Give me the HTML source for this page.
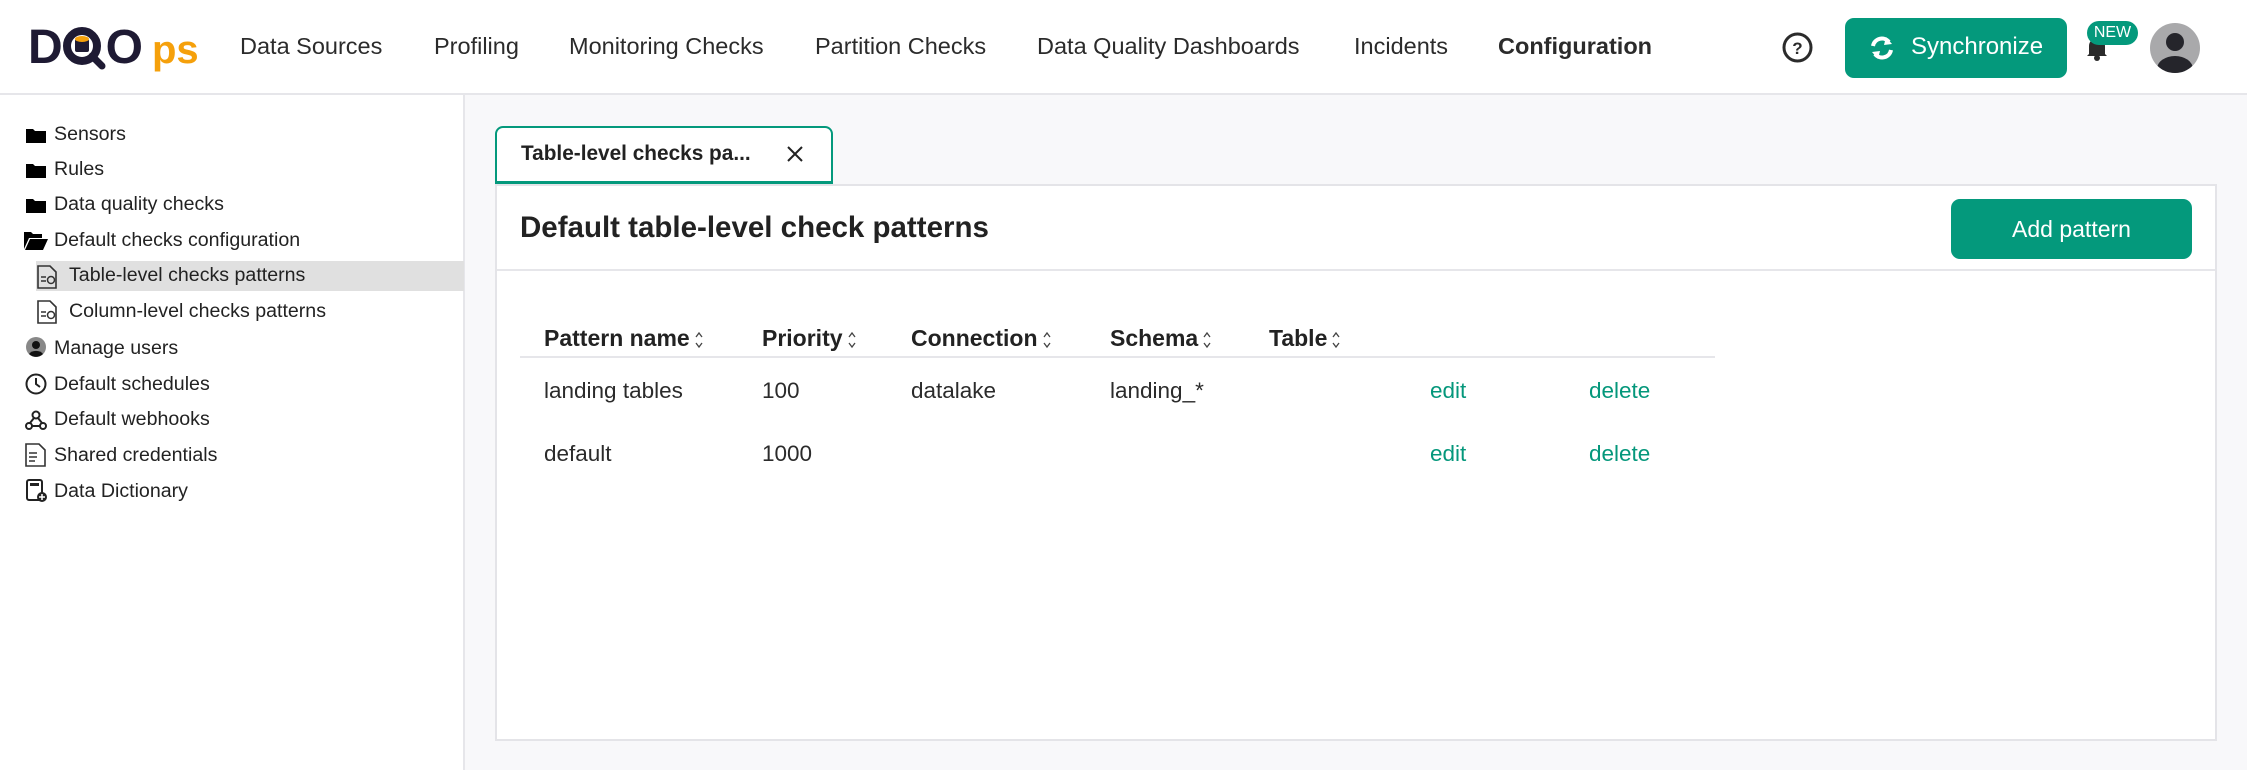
<!DOCTYPE html>
<html><head><meta charset="utf-8"><style>
*{margin:0;padding:0;box-sizing:border-box}
body{width:2247px;height:770px;overflow:hidden;background:#f8f8fa;font-family:"Liberation Sans",Arial,sans-serif;color:#2b2b2b;position:relative}
.a{position:absolute;white-space:nowrap}
.hdr{position:absolute;left:0;top:0;width:2247px;height:95px;background:#fff;border-bottom:2px solid #e6e6ea}
.nav{font-size:23.5px;color:#2b2b2b;top:33px}
.side{position:absolute;left:0;top:95px;width:465px;height:675px;background:#fff;border-right:2px solid #e6e6ea}
.si{font-size:19.6px;color:#222;line-height:24px}
.ic{position:absolute}
.green{color:#04977b}
.th{font-size:23px;font-weight:bold;color:#222;top:325px}
.td{font-size:22.5px}
.srt{display:inline-block;width:10px;height:18px;vertical-align:middle;margin-left:4px}
</style></head><body>
<div class="hdr"></div>
<!-- logo -->
<div class="a" style="left:28px;top:24px;font-size:48px;font-weight:900;color:#1e1a33;letter-spacing:-1px;line-height:48px">D<span style="display:inline-block;width:44px"></span>O</div>
<svg class="ic" style="left:62px;top:27px" width="50" height="44" viewBox="0 0 50 44"><circle cx="20" cy="19" r="15" fill="none" stroke="#1e1a33" stroke-width="8"/><line x1="30" y1="29" x2="40" y2="39" stroke="#1e1a33" stroke-width="7" stroke-linecap="round"/><rect x="13" y="12" width="14" height="13" rx="2" fill="#1e1a33"/><ellipse cx="20" cy="12" rx="7" ry="3" fill="#f5a00b"/></svg>
<div class="a" style="left:152px;top:30px;font-size:40px;font-weight:900;color:#f5a00b;line-height:40px">ps</div>
<div class="a nav" style="left:240px">Data Sources</div>
<div class="a nav" style="left:434px">Profiling</div>
<div class="a nav" style="left:569px">Monitoring Checks</div>
<div class="a nav" style="left:815px">Partition Checks</div>
<div class="a nav" style="left:1037px">Data Quality Dashboards</div>
<div class="a nav" style="left:1354px">Incidents</div>
<div class="a nav" style="left:1498px;font-weight:bold">Configuration</div>
<svg class="ic" style="left:1782px;top:32px" width="31" height="31" viewBox="0 0 31 31"><circle cx="15.5" cy="15.5" r="13.5" fill="none" stroke="#2b2b2b" stroke-width="3"/><text x="15.5" y="22" font-size="17" font-weight="bold" text-anchor="middle" font-family="Liberation Sans" fill="#2b2b2b">?</text></svg>
<div class="a" style="left:1845px;top:18px;width:222px;height:60px;background:#04997c;border-radius:9px"></div>
<svg class="ic" style="left:1869px;top:35px" width="26" height="26" viewBox="0 0 26 26"><path d="M4 11 A9 9 0 0 1 20 7" fill="none" stroke="#fff" stroke-width="4"/><path d="M17 2 L23 9 L15 10Z" fill="#fff"/><path d="M22 15 A9 9 0 0 1 6 19" fill="none" stroke="#fff" stroke-width="4"/><path d="M9 24 L3 17 L11 16Z" fill="#fff"/></svg>
<div class="a" style="left:1911px;top:33px;font-size:24px;color:#fff">Synchronize</div>
<svg class="ic" style="left:2085px;top:34px" width="24" height="28" viewBox="0 0 24 28"><path d="M4 20 V12 A8 8 0 0 1 20 12 V20 L22 22 H2Z" fill="#2b2b2b"/><circle cx="12" cy="24" r="3" fill="#2b2b2b"/></svg>
<div class="a" style="left:2087px;top:21px;width:51px;height:24px;background:#04997c;border-radius:12px;color:#fff;font-size:16px;text-align:center;line-height:24px">NEW</div>
<svg class="ic" style="left:2150px;top:23px" width="50" height="50" viewBox="0 0 50 50"><defs><clipPath id="c"><circle cx="25" cy="25" r="25"/></clipPath></defs><circle cx="25" cy="25" r="25" fill="#a9a9ab"/><g clip-path="url(#c)" fill="#25252b"><circle cx="25" cy="19" r="9"/><ellipse cx="25" cy="46" rx="18" ry="13"/></g></svg>

<div class="side"></div>
<div class="a" style="left:36px;top:261px;width:428px;height:30px;background:#e0e0e0"></div>
<svg class="ic" style="left:26px;top:127px" width="20" height="16"><path d="M0 2 H7 L9 4 H20 V16 H0Z" fill="#000"/></svg>
<svg class="ic" style="left:26px;top:162px" width="20" height="16"><path d="M0 2 H7 L9 4 H20 V16 H0Z" fill="#000"/></svg>
<svg class="ic" style="left:26px;top:197px" width="20" height="16"><path d="M0 2 H7 L9 4 H20 V16 H0Z" fill="#000"/></svg>
<svg class="ic" style="left:24px;top:232px" width="24" height="18"><path d="M0 0 H7 L9 2 H18 V6 H5 L0 17Z M6 7 H24 L19 18 H1Z" fill="#000"/></svg>
<svg class="ic" style="left:37px;top:265px" width="22" height="24"><path d="M1 1 H13 L19 7 V23 H1Z" fill="none" stroke="#333" stroke-width="1.6"/><path d="M4 12 H9 M4 16 H9" stroke="#333" stroke-width="1.4"/><circle cx="14" cy="15" r="3.5" fill="none" stroke="#333" stroke-width="1.5"/></svg>
<svg class="ic" style="left:37px;top:300px" width="22" height="24"><path d="M1 1 H13 L19 7 V23 H1Z" fill="none" stroke="#333" stroke-width="1.6"/><path d="M4 12 H9 M4 16 H9" stroke="#333" stroke-width="1.4"/><circle cx="14" cy="15" r="3.5" fill="none" stroke="#333" stroke-width="1.5"/></svg>
<svg class="ic" style="left:26px;top:337px" width="20" height="20"><circle cx="10" cy="10" r="10" fill="#888"/><circle cx="10" cy="8" r="4" fill="#111"/><path d="M3 17 A8 6 0 0 1 17 17 A10 10 0 0 1 3 17Z" fill="#111"/></svg>
<svg class="ic" style="left:25px;top:373px" width="22" height="22"><circle cx="11" cy="11" r="9.5" fill="none" stroke="#222" stroke-width="2"/><path d="M11 5 V11 L15 14" fill="none" stroke="#222" stroke-width="2"/></svg>
<svg class="ic" style="left:25px;top:409px" width="22" height="22"><circle cx="11" cy="6" r="3.5" fill="none" stroke="#222" stroke-width="2"/><circle cx="4" cy="17" r="3" fill="none" stroke="#222" stroke-width="2"/><circle cx="18" cy="17" r="3" fill="none" stroke="#222" stroke-width="2"/><path d="M9 9 L5 14 M7 17 H15 M13 9 L17 14" stroke="#222" stroke-width="2"/></svg>
<svg class="ic" style="left:25px;top:443px" width="22" height="24"><path d="M1 1 H14 L20 7 V23 H1Z" fill="none" stroke="#333" stroke-width="1.6"/><path d="M4 10 H12 M4 14 H12 M4 18 H10" stroke="#333" stroke-width="1.4"/></svg>
<svg class="ic" style="left:26px;top:479px" width="22" height="24"><rect x="1" y="1" width="15" height="20" rx="2" fill="none" stroke="#222" stroke-width="2"/><rect x="4" y="4" width="9" height="3" fill="#222"/><circle cx="16" cy="18" r="5" fill="#222"/><path d="M16 15 V21 M13 18 H19" stroke="#fff" stroke-width="1.5"/></svg>
<div class="a si" style="left:54px;top:122px">Sensors</div>
<div class="a si" style="left:54px;top:157px">Rules</div>
<div class="a si" style="left:54px;top:192px">Data quality checks</div>
<div class="a si" style="left:54px;top:228px">Default checks configuration</div>
<div class="a si" style="left:69px;top:263px">Table-level checks patterns</div>
<div class="a si" style="left:69px;top:299px">Column-level checks patterns</div>
<div class="a si" style="left:54px;top:336px">Manage users</div>
<div class="a si" style="left:54px;top:372px">Default schedules</div>
<div class="a si" style="left:54px;top:407px">Default webhooks</div>
<div class="a si" style="left:54px;top:443px">Shared credentials</div>
<div class="a si" style="left:54px;top:479px">Data Dictionary</div>

<div class="a" style="left:495px;top:126px;width:338px;height:59px;background:#fff;border:2px solid #04997c;border-bottom:4px solid #04997c;border-radius:8px 8px 0 0"></div>
<div class="a" style="left:521px;top:142px;font-size:20.8px;font-weight:bold;color:#222">Table-level checks pa...</div>
<svg class="ic" style="left:787px;top:146px" width="16" height="16"><path d="M1 1 L15 15 M15 1 L1 15" stroke="#222" stroke-width="2"/></svg>
<div class="a" style="left:495px;top:184px;width:1722px;height:557px;background:#fff;border:2px solid #e4e4e8"></div>
<div class="a" style="left:497px;top:269px;width:1718px;height:2px;background:#e6e6ea"></div>
<div class="a" style="left:520px;top:211px;font-size:29.5px;font-weight:bold;color:#222">Default table-level check patterns</div>
<div class="a" style="left:1951px;top:199px;width:241px;height:60px;background:#04997c;border-radius:9px;color:#fff;font-size:23px;text-align:center;line-height:60px">Add pattern</div>
<div class="a" style="left:520px;top:356px;width:1195px;height:2px;background:#e6e6ea"></div>
<div class="a th" style="left:544px">Pattern name<svg class="srt" viewBox="0 0 10 18"><path d="M2 6 L5 2 L8 6 M2 12 L5 16 L8 12" fill="none" stroke="#444" stroke-width="1.3"/></svg></div>
<div class="a th" style="left:762px">Priority<svg class="srt" viewBox="0 0 10 18"><path d="M2 6 L5 2 L8 6 M2 12 L5 16 L8 12" fill="none" stroke="#444" stroke-width="1.3"/></svg></div>
<div class="a th" style="left:911px">Connection<svg class="srt" viewBox="0 0 10 18"><path d="M2 6 L5 2 L8 6 M2 12 L5 16 L8 12" fill="none" stroke="#444" stroke-width="1.3"/></svg></div>
<div class="a th" style="left:1110px">Schema<svg class="srt" viewBox="0 0 10 18"><path d="M2 6 L5 2 L8 6 M2 12 L5 16 L8 12" fill="none" stroke="#444" stroke-width="1.3"/></svg></div>
<div class="a th" style="left:1269px">Table<svg class="srt" viewBox="0 0 10 18"><path d="M2 6 L5 2 L8 6 M2 12 L5 16 L8 12" fill="none" stroke="#444" stroke-width="1.3"/></svg></div>
<div class="a td" style="left:544px;top:378px">landing tables</div>
<div class="a td" style="left:762px;top:378px">100</div>
<div class="a td" style="left:911px;top:378px">datalake</div>
<div class="a td" style="left:1110px;top:378px">landing_*</div>
<div class="a td green" style="left:1430px;top:378px">edit</div>
<div class="a td green" style="left:1589px;top:378px">delete</div>
<div class="a td" style="left:544px;top:441px">default</div>
<div class="a td" style="left:762px;top:441px">1000</div>
<div class="a td green" style="left:1430px;top:441px">edit</div>
<div class="a td green" style="left:1589px;top:441px">delete</div>
</body></html>
